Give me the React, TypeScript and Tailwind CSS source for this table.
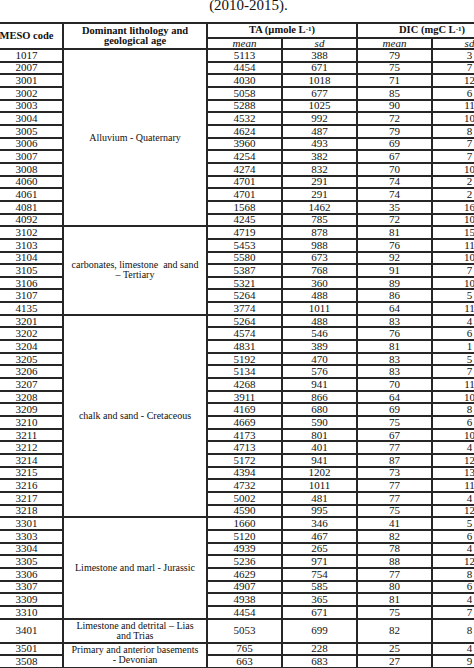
import React from "react";

type Row = [string, string, string, string, string];
type Group = { label: React.ReactNode; rows: Row[] };

const groups: Group[] = [
  {
    label: "Alluvium - Quaternary",
    rows: [
      ["1017", "5113", "388", "79", "3"],
      ["2007", "4454", "671", "75", "7"],
      ["3001", "4030", "1018", "71", "12"],
      ["3002", "5058", "677", "85", "6"],
      ["3003", "5288", "1025", "90", "11"],
      ["3004", "4532", "992", "72", "10"],
      ["3005", "4624", "487", "79", "8"],
      ["3006", "3960", "493", "69", "7"],
      ["3007", "4254", "382", "67", "7"],
      ["3008", "4274", "832", "70", "10"],
      ["4060", "4701", "291", "74", "2"],
      ["4061", "4701", "291", "74", "2"],
      ["4081", "1568", "1462", "35", "16"],
      ["4092", "4245", "785", "72", "10"],
    ],
  },
  {
    label: (
      <>
        carbonates, limestone&nbsp; and sand
        <br />– Tertiary
      </>
    ),
    rows: [
      ["3102", "4719", "878", "81", "15"],
      ["3103", "5453", "988", "76", "11"],
      ["3104", "5580", "673", "92", "10"],
      ["3105", "5387", "768", "91", "7"],
      ["3106", "5321", "360", "89", "10"],
      ["3107", "5264", "488", "86", "5"],
      ["4135", "3774", "1011", "64", "11"],
    ],
  },
  {
    label: "chalk and sand - Cretaceous",
    rows: [
      ["3201", "5264", "488", "83", "4"],
      ["3202", "4574", "546", "76", "6"],
      ["3204", "4831", "389", "81", "1"],
      ["3205", "5192", "470", "83", "5"],
      ["3206", "5134", "576", "83", "7"],
      ["3207", "4268", "941", "70", "11"],
      ["3208", "3911", "866", "64", "10"],
      ["3209", "4169", "680", "69", "8"],
      ["3210", "4669", "590", "75", "6"],
      ["3211", "4173", "801", "67", "10"],
      ["3212", "4713", "401", "77", "4"],
      ["3214", "5172", "941", "87", "12"],
      ["3215", "4394", "1202", "73", "13"],
      ["3216", "4732", "1011", "77", "11"],
      ["3217", "5002", "481", "77", "4"],
      ["3218", "4590", "995", "75", "12"],
    ],
  },
  {
    label: "Limestone and marl - Jurassic",
    rows: [
      ["3301", "1660", "346", "41", "5"],
      ["3303", "5120", "467", "82", "6"],
      ["3304", "4939", "265", "78", "4"],
      ["3305", "5236", "971", "88", "12"],
      ["3306", "4629", "754", "77", "8"],
      ["3307", "4907", "585", "80", "6"],
      ["3309", "4938", "365", "81", "4"],
      ["3310", "4454", "671", "75", "7"],
    ],
  },
  {
    label: (
      <>
        Limestone and detrital – Lias
        <br />
        and Trias
      </>
    ),
    rows: [["3401", "5053", "699", "82", "8"]],
  },
  {
    label: (
      <>
        Primary and anterior basements
        <br />- Devonian
      </>
    ),
    rows: [
      ["3501", "765", "228", "25", "4"],
      ["3508", "663", "683", "27", "9"],
    ],
  },
];

const spanClass: Record<number, string> = {
  1: "row-span-1",
  2: "row-span-2",
  7: "row-span-7",
  8: "row-span-8",
  14: "row-span-[14]",
  16: "row-span-[16]",
};

const cell = "bg-white flex items-center justify-center leading-none whitespace-nowrap";

export default function App() {
  return (
    <div
      className="w-[474px] h-[668px] overflow-hidden bg-white text-[#111]"
      style={{ fontFamily: '"Liberation Serif", "Times New Roman", serif' }}
    >
      <div className="w-[519px] ml-[-11px]">
        <div className="h-[15px] mt-[-2px] mb-[9px] text-center text-[15px] leading-[15px]">
          (2010-2015).
        </div>
        <div className="grid grid-cols-[71px_142px_73px_73px_73px_73px] grid-rows-[12.5px_9.5px_repeat(45,10.67px)_22px_repeat(3,10.67px)] gap-[2px] bg-[#262626] border-2 border-[#262626] text-[11px]">
          <div className={`${cell} row-span-2 font-bold text-[10.5px]`}>MESO code</div>
          <div className={`${cell} row-span-2 font-bold flex-col text-[10.5px] leading-[12px]`}>
            <span>Dominant lithology and</span>
            <span>geological age</span>
          </div>
          <div className={`${cell} col-span-2 font-bold text-[10.5px]`}>
            TA (µmole L<sup className="text-[7px] relative top-[-1px]">-1</sup>)
          </div>
          <div className={`${cell} col-span-2 font-bold text-[10.5px]`}>
            DIC (mgC L<sup className="text-[7px] relative top-[-1px]">-1</sup>)
          </div>
          <div className={`${cell} italic`}>mean</div>
          <div className={`${cell} italic`}>sd</div>
          <div className={`${cell} italic`}>mean</div>
          <div className={`${cell} italic`}>sd</div>
          {groups.map((g, gi) =>
            g.rows.map((r, ri) => (
              <React.Fragment key={`${gi}-${ri}`}>
                <div className={cell}>{r[0]}</div>
                {ri === 0 && (
                  <div
                    className={`${cell} ${spanClass[g.rows.length]} text-center text-[10px] leading-[12px]`}
                  >
                    <span>{g.label}</span>
                  </div>
                )}
                <div className={cell}>{r[1]}</div>
                <div className={cell}>{r[2]}</div>
                <div className={cell}>{r[3]}</div>
                <div className={cell}>{r[4]}</div>
              </React.Fragment>
            ))
          )}
        </div>
      </div>
    </div>
  );
}
